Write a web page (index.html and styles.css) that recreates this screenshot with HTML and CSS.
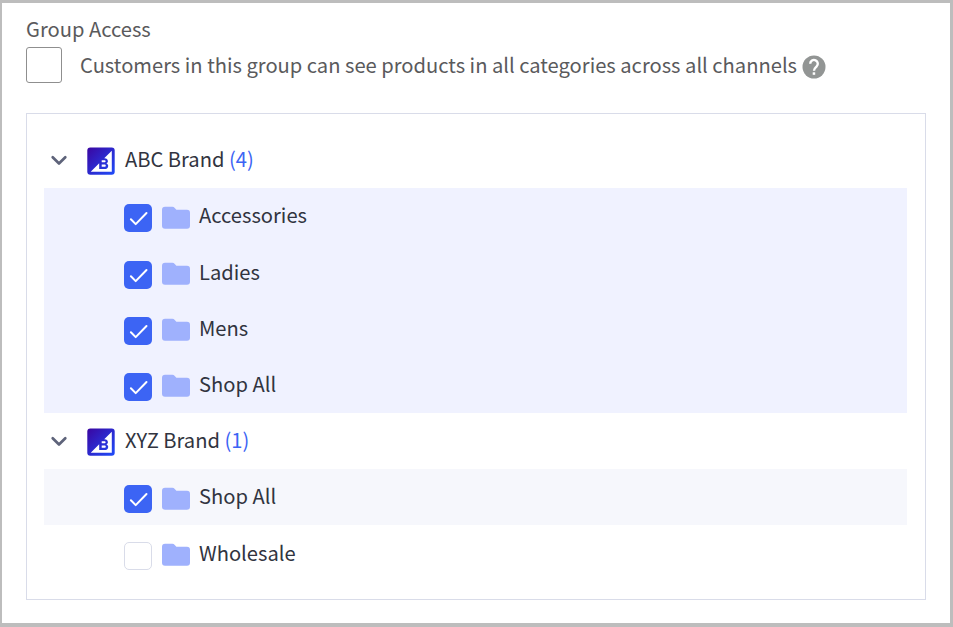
FILE: index.html
```html
<!DOCTYPE html>
<html lang="en">
<head>
    <title>Group Access</title>
    <meta charset="UTF-8">
    <link rel="stylesheet" href="styles.css">
</head>
<body>
    <!-- Shared icons -->
    <svg class="sprite" width="0" height="0">
        <defs>
            <linearGradient id="brandFill" x1="0" y1="0" x2="1" y2="1">
                <stop offset="0" stop-color="#3a05a0"/>
                <stop offset="1" stop-color="#1f4dfb"/>
            </linearGradient>
        </defs>
        <symbol id="chevron" viewBox="0 0 18 12">
            <path d="M2.700 2.200 9 8.500l6.300-6.300" fill="none" stroke="#5e637a" stroke-width="2.700" stroke-linecap="round" stroke-linejoin="round"/>
        </symbol>
        <symbol id="brand" viewBox="0 0 28 28">
            <rect x=".3" y=".5" width="27.400" height="27.300" rx="3" fill="url(#brandFill)"/>
            <path d="M24.800 3.700v21.100H3.700l8.500-8.500V22H17.500c2.400 0 3.700-1.200 3.700-3.100 0-1.300-.8-2.200-1.800-2.500.9-.3 1.500-1.200 1.500-2.200 0-1.900-1.300-2.900-3.400-2.900h-.3z" fill="#fff"/>
            <path d="M14.700 13.300h2.600c.8 0 1.300.4 1.300 1s-.5 1-1.300 1h-2.600zM14.700 17.600h2.700c.9 0 1.400.4 1.400 1.100s-.5 1.100-1.400 1.100h-2.700z" fill="#fff"/>
        </symbol>
        <symbol id="folder" viewBox="0 0 30 24">
            <path d="M4 .8h7.500c.8 0 1.500.3 2 .9L15.400 3.700H26a3 3 0 0 1 3 3v13a3 3 0 0 1-3 3H4a3 3 0 0 1-3-3V3.800a3 3 0 0 1 3-3z" fill="#9fb1fd"/>
        </symbol>
        <symbol id="check" viewBox="0 0 28 28">
            <path d="M6.900 15.200l4.800 4.900L22.500 9" fill="none" stroke="#fff" stroke-width="2" stroke-linecap="round" stroke-linejoin="round"/>
        </symbol>
    </svg>

    <div class="page">
        <div class="title">Group Access</div>
        <div class="access">
            <span class="access-box"></span>
            <span class="access-label">Customers in this group can see products in all categories across all channels</span>
            <svg class="help" viewBox="0 0 24 24">
                <circle cx="12" cy="12" r="11.500" fill="#929594"/>
                <path d="M8.200 8.700a3.800 3.800 0 1 1 6.300 2.900C13.200 12.800 12 13.500 12 15.700" fill="none" stroke="#fff" stroke-width="2.400"/>
                <rect x="10.700" y="17.300" width="2.500" height="2.500" fill="#fff"/>
            </svg>
        </div>

        <div class="tree">
            <div class="row">
                <svg class="chevron"><use href="#chevron"/></svg>
                <svg class="brand"><use href="#brand"/></svg>
                <span class="name">ABC Brand <span class="count">(4)</span></span>
            </div>
            <div class="group selected">
                <div class="row child">
                    <span class="box checked"><svg><use href="#check"/></svg></span>
                    <svg class="folder"><use href="#folder"/></svg>
                    <span class="name">Accessories</span>
                </div>
                <div class="row child">
                    <span class="box checked"><svg><use href="#check"/></svg></span>
                    <svg class="folder"><use href="#folder"/></svg>
                    <span class="name">Ladies</span>
                </div>
                <div class="row child">
                    <span class="box checked"><svg><use href="#check"/></svg></span>
                    <svg class="folder"><use href="#folder"/></svg>
                    <span class="name">Mens</span>
                </div>
                <div class="row child">
                    <span class="box checked"><svg><use href="#check"/></svg></span>
                    <svg class="folder"><use href="#folder"/></svg>
                    <span class="name">Shop All</span>
                </div>
            </div>
            <div class="row">
                <svg class="chevron"><use href="#chevron"/></svg>
                <svg class="brand"><use href="#brand"/></svg>
                <span class="name">XYZ Brand <span class="count">(1)</span></span>
            </div>
            <div class="group">
                <div class="row child hovered">
                    <span class="box checked"><svg><use href="#check"/></svg></span>
                    <svg class="folder"><use href="#folder"/></svg>
                    <span class="name">Shop All</span>
                </div>
                <div class="row child">
                    <span class="box"></span>
                    <svg class="folder"><use href="#folder"/></svg>
                    <span class="name">Wholesale</span>
                </div>
            </div>
        </div>
    </div>
</body>
</html>
```
FILE: styles.css
```css
* {
    box-sizing: border-box;
}
body {
    margin: 0;
    font-family: "Noto Sans CJK SC", sans-serif;
    font-size: 20.15px;
    line-height: 30px;
    color: #313440;
    background-color: #fff;
}
.sprite {
    display: block;
}
.page {
    height: 627px;
    padding: 11px 24px 0;
    border: solid #bdbdbd;
    border-width: 3px 3px 4px 2px;
}
.title {
    color: #5a5a5c;
}
.access {
    display: flex;
    align-items: center;
    height: 42px;
    color: #5a5a5c;
    white-space: nowrap;
}
.access-box {
    width: 36px;
    height: 36px;
    margin-right: 18px;
    border: 1px solid #8f8f8f;
    border-radius: 3px;
}
.access-label {
    margin-bottom: 1px;
}
.help {
    width: 24px;
    height: 24px;
    margin: 4px 0 0 5.4px;
}
.tree {
    width: 900px;
    height: 487px;
    margin-top: 27px;
    padding: 18px 18px 0 17px;
    border: 1px solid #d9dce9;
}
.row {
    display: flex;
    align-items: center;
    height: 56.21px;
    padding-left: 6px;
}
.child {
    padding-left: 80px;
}
.selected {
    background-color: #f0f2ff;
}
.hovered {
    background-color: #f6f7fc;
}
.chevron {
    width: 18px;
    height: 12px;
    margin-top: 2px;
}
.brand {
    width: 28px;
    height: 28px;
    margin: 2px 10px 0 19px;
}
.name {
    margin-bottom: 2px;
}
.count {
    color: #3c64f4;
}
.box {
    width: 28px;
    height: 28px;
    margin-top: 4.1px;
    border: 1px solid #d9dce9;
    border-radius: 5px;
}
.checked {
    border: none;
    background-color: #3c64f4;
}
.box svg {
    display: block;
    width: 28px;
    height: 28px;
}
.folder {
    width: 30px;
    height: 24px;
    margin: 3px 8px 0 9px;
}
```
